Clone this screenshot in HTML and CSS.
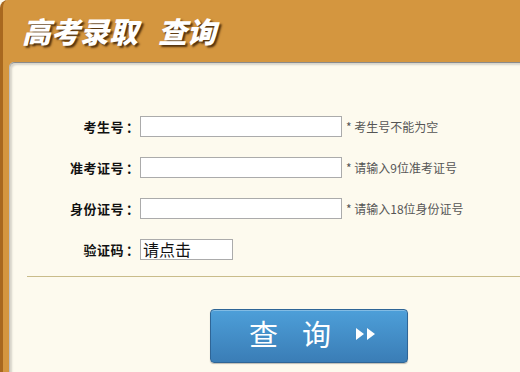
FILE: index.html
```html
<!DOCTYPE html>
<html lang="zh">
<head>
<meta charset="utf-8">
<title>高考录取 查询</title>
<link rel="stylesheet" href="styles.css">
</head>
<body>
<div class="page">
  <div class="header">
    <h1 class="title"><span>高考录取</span><span class="gap">查询</span></h1>
  </div>
  <div class="panel">
    <div class="form">
      <label class="label">考生号<span class="colon">：</span></label>
      <input class="field" type="text">
      <span class="hint">* 考生号不能为空</span>

      <label class="label">准考证号<span class="colon">：</span></label>
      <input class="field" type="text">
      <span class="hint">* 请输入9位准考证号</span>

      <label class="label">身份证号<span class="colon">：</span></label>
      <input class="field" type="text">
      <span class="hint">* 请输入18位身份证号</span>

      <label class="label">验证码<span class="colon">：</span></label>
      <div class="captcha">请点击</div>
      <span></span>
    </div>
    <div class="sep"></div>
    <div class="actions">
      <button class="btn" type="button"><span class="btn-text">查</span><span class="btn-text second">询</span>
        <svg class="arrows" width="22" height="14" viewBox="0 0 22 14"><path d="M1 1 L9 7 L1 13 Z M12 1 L20 7 L12 13 Z" fill="#fff"/></svg>
      </button>
    </div>
  </div>
</div>
</body>
</html>
```

FILE: styles.css
```css
html, body {
  margin: 0;
  padding: 0;
  background: #fdfaee;
}
body {
  width: 520px;
  height: 372px;
  overflow: hidden;
  font-family: "Noto Sans CJK SC", "DejaVu Sans", sans-serif;
}
.page {
  height: 372px;
  background: #d4963f;
  border-left: 3px solid #a8681f;
  border-top-left-radius: 8px;
  display: flex;
  flex-direction: column;
}
.header {
  height: 62px;
  flex: none;
  display: flex;
  align-items: center;
  padding-left: 19px;
}
.title {
  margin: 0;
  font-size: 29px;
  font-weight: 900;
  font-style: italic;
  color: #fff;
  line-height: 1;
  text-shadow: 2px 2px 2px rgba(50, 25, 0, 0.8);
  margin-top: -1px;
}
.title .gap {
  margin-left: 20px;
}
.panel {
  flex: 1;
  margin-left: 7px;
  background: #fdfaee;
  border-top: 1px solid #8a8a8a;
  border-top-left-radius: 5px;
  box-shadow: inset 2px 2px 2px rgba(0, 0, 0, 0.15), -1px 0 0 #bfbfbf;
}
.form {
  display: grid;
  grid-template-columns: 126px 202px auto;
  column-gap: 4px;
  row-gap: 20px;
  padding-top: 53px;
  align-items: center;
}
.label {
  text-align: right;
  font-size: 13px;
  font-weight: bold;
  color: #111;
  line-height: 20px;
  letter-spacing: 0.5px;
}
.colon {
  display: inline-block;
  width: 10px;
  margin-left: 2px;
  text-align: left;
}
.field {
  box-sizing: border-box;
  width: 202px;
  height: 21px;
  border: 1px solid #ababab;
  background: #fff;
  margin: 0;
  padding: 0 2px;
}
.hint {
  font-size: 12px;
  color: #555;
  line-height: 20px;
}
.captcha {
  box-sizing: border-box;
  width: 93px;
  height: 21px;
  border: 1px solid #ababab;
  background: #fff;
  font-size: 16px;
  line-height: 18px;
  color: #111;
  padding-left: 2px;
}
.sep {
  margin: 16px 0 0 17px;
  height: 1px;
  background: #c9bc8a;
}
.actions {
  padding: 32px 0 0 200px;
}
.btn {
  box-sizing: border-box;
  width: 198px;
  height: 54px;
  border: 1px solid #2f6596;
  border-radius: 4px;
  background: linear-gradient(#4d9fd9, #3a7db6);
  box-shadow: inset 0 1px 0 rgba(255, 255, 255, 0.3), 0 1px 1px rgba(0, 0, 0, 0.25);
  display: flex;
  align-items: center;
  padding: 0 0 5px 38px;
  color: #fff;
  font-family: "Noto Sans CJK SC", sans-serif;
}
.btn-text {
  font-size: 29px;
  line-height: 1;
}
.btn-text.second {
  margin-left: 24px;
}
.arrows {
  margin-left: 24px;
}
```
